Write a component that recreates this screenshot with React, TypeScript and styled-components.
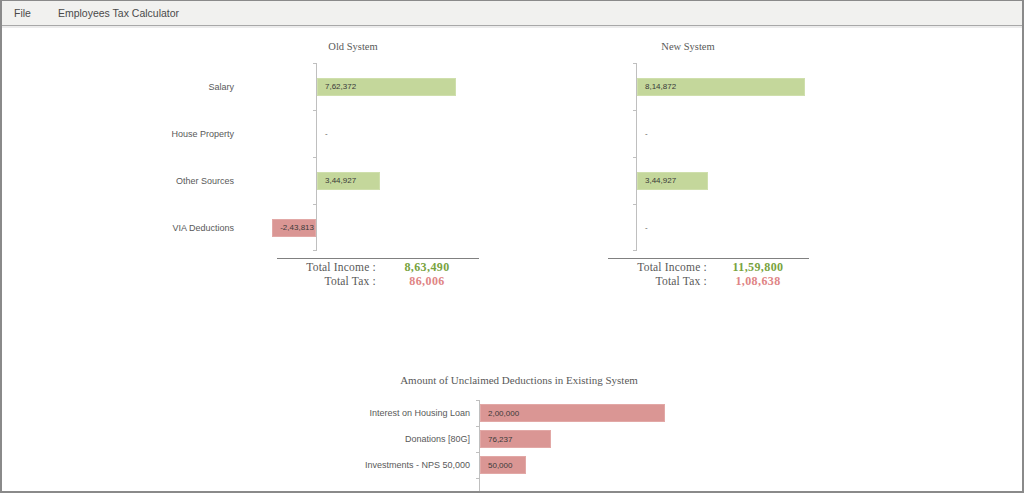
import React from "react";
import styled, { createGlobalStyle } from "styled-components";

const Global = createGlobalStyle`
  html, body {
    margin: 0;
    padding: 0;
    background: #ffffff;
  }
  * {
    box-sizing: border-box;
  }
`;

const SANS = `"Liberation Sans", Arial, sans-serif`;
const SERIF = `"Liberation Serif", "Times New Roman", serif`;

const Frame = styled.div`
  width: 1024px;
  height: 493px;
  border-style: solid;
  border-color: #8a8a8a;
  border-width: 1px 2px 2px 2px;
  background: #ffffff;
  overflow: hidden;
  display: flex;
  flex-direction: column;
`;

const MenuBar = styled.div`
  height: 25px;
  flex: none;
  display: flex;
  align-items: center;
  gap: 27px;
  padding-left: 12px;
  background: #f1f1ef;
  border-bottom: 1px solid #a8a8a8;
  box-shadow: 0 2px 0 #ececec;
  font-family: ${SANS};
  font-size: 10.5px;
  color: #4a4a4a;
`;

const MenuItem = styled.span`
  padding-bottom: 1px;
`;

const Content = styled.div`
  flex: 1;
  padding-top: 14px;
  display: flex;
  flex-direction: column;
`;

const TopRow = styled.div`
  display: flex;
  align-items: flex-start;
`;

const Block = styled.div<{ $left: number }>`
  margin-left: ${({ $left }) => $left}px;
  display: flex;
  flex-direction: column;
`;

const Title = styled.div<{ $width: number; $size?: number; $gap?: number }>`
  width: ${({ $width }) => $width}px;
  text-align: center;
  font-family: ${SERIF};
  font-size: ${({ $size }) => $size ?? 10.5}px;
  line-height: 13px;
  color: #595959;
  margin-bottom: ${({ $gap }) => $gap ?? 10}px;
`;

const Row = styled.div<{ $label: number; $neg: number; $pos: number; $h: number }>`
  display: grid;
  grid-template-columns: ${({ $label, $neg, $pos }) => `${$label}px ${$neg}px ${$pos}px`};
  height: ${({ $h }) => $h}px;
  align-items: center;
`;

const Label = styled.div<{ $pad: number }>`
  text-align: right;
  padding-right: ${({ $pad }) => $pad}px;
  font-family: ${SANS};
  font-size: 9px;
  color: #595959;
  white-space: nowrap;
`;

const NegZone = styled.div`
  height: 100%;
  display: flex;
  align-items: center;
  justify-content: flex-end;
`;

const PosZone = styled.div<{ $last: boolean }>`
  position: relative;
  height: 100%;
  display: flex;
  align-items: center;
  border-left: 1px solid #bfbfbf;

  &::before {
    content: "";
    position: absolute;
    left: -4px;
    top: 0;
    width: 3px;
    height: 1px;
    background: #bfbfbf;
  }

  &::after {
    content: "";
    display: ${({ $last }) => ($last ? "block" : "none")};
    position: absolute;
    left: -4px;
    bottom: 0;
    width: 3px;
    height: 1px;
    background: #bfbfbf;
  }
`;

const Bar = styled.div<{ $tone: "green" | "red"; $neg?: boolean }>`
  height: 18px;
  display: flex;
  align-items: center;
  justify-content: ${({ $neg }) => ($neg ? "flex-end" : "flex-start")};
  padding: ${({ $neg }) => ($neg ? "0 1px 0 0" : "0 0 0 7px")};
  background: ${({ $tone }) => ($tone === "green" ? "#c4d79b" : "#da9694")};
  border: 1px solid ${({ $tone }) => ($tone === "green" ? "#cfdfac" : "#e2a8a6")};
  font-family: ${SANS};
  font-size: 8px;
  color: #3a3a3a;
  white-space: nowrap;
  overflow: visible;
`;

const Dash = styled.span`
  margin-left: 8px;
  font-family: ${SANS};
  font-size: 8px;
  color: #595959;
`;

const Baseline = styled.div<{ $left: number; $width: number }>`
  margin-top: 7px;
  margin-left: ${({ $left }) => $left}px;
  width: ${({ $width }) => $width}px;
  height: 0;
  border-top: 1.5px solid #808080;
  margin-bottom: 1px;
`;

const Totals = styled.div<{ $label: number }>`
  display: grid;
  grid-template-columns: ${({ $label }) => `${$label}px 80px`};
  column-gap: 11px;
  font-family: ${SERIF};
  font-size: 11.5px;
  line-height: 14px;
`;

const TotalLabel = styled.span`
  text-align: right;
  color: #595959;
  letter-spacing: 0.2px;
`;

const TotalValue = styled.span<{ $tone: "green" | "red" }>`
  text-align: center;
  font-size: 12px;
  font-weight: 700;
  letter-spacing: 0.4px;
  color: ${({ $tone }) => ($tone === "green" ? "#79a33e" : "#e08585")};
`;

const BottomSection = styled.div`
  margin-top: 86px;
`;

type Item = { label: string; value: number };

// Indian digit grouping: 8,63,490
const fmt = (v: number) => {
  const neg = v < 0;
  const s = String(Math.abs(v));
  const last3 = s.slice(-3);
  let rest = s.slice(0, -3);
  const parts: string[] = [];
  while (rest.length > 2) {
    parts.unshift(rest.slice(-2));
    rest = rest.slice(0, -2);
  }
  if (rest) parts.unshift(rest);
  const out = parts.length ? `${parts.join(",")},${last3}` : last3;
  return (neg ? "-" : "") + out;
};

function BarChart({
  items,
  scale,
  label,
  labelPad,
  neg,
  pos,
  rowH,
  showLabels,
  tone,
}: {
  items: Item[];
  scale: number;
  label: number;
  labelPad: number;
  neg: number;
  pos: number;
  rowH: number;
  showLabels: boolean;
  tone: "green" | "red";
}) {
  return (
    <div>
      {items.map((it, i) => (
        <Row key={it.label + i} $label={label} $neg={neg} $pos={pos} $h={rowH}>
          <Label $pad={labelPad}>{showLabels ? it.label : ""}</Label>
          <NegZone>
            {it.value < 0 && (
              <Bar $tone="red" $neg style={{ width: Math.round(-it.value * scale) }}>
                {fmt(it.value)}
              </Bar>
            )}
          </NegZone>
          <PosZone $last={i === items.length - 1}>
            {it.value > 0 && (
              <Bar $tone={tone} style={{ width: Math.round(it.value * scale) }}>
                {fmt(it.value)}
              </Bar>
            )}
            {it.value === 0 && it.label !== "" && <Dash>-</Dash>}
          </PosZone>
        </Row>
      ))}
    </div>
  );
}

const oldItems: Item[] = [
  { label: "Salary", value: 762372 },
  { label: "House Property", value: 0 },
  { label: "Other Sources", value: 344927 },
  { label: "VIA Deductions", value: -243813 },
];

const newItems: Item[] = [
  { label: "Salary", value: 814872 },
  { label: "House Property", value: 0 },
  { label: "Other Sources", value: 344927 },
  { label: "VIA Deductions", value: 0 },
];

const unclaimed: Item[] = [
  { label: "Interest on Housing Loan", value: 200000 },
  { label: "Donations [80G]", value: 76237 },
  { label: "Investments - NPS 50,000", value: 50000 },
  { label: "", value: 0 },
];

export default function App() {
  return (
    <>
      <Global />
      <Frame>
        <MenuBar>
          <MenuItem>File</MenuItem>
          <MenuItem>Employees Tax Calculator</MenuItem>
        </MenuBar>
        <Content>
          <TopRow>
            <Block $left={146}>
              <Title $width={410}>Old System</Title>
              <BarChart
                items={oldItems}
                scale={0.0001823}
                label={86}
                labelPad={0}
                neg={82}
                pos={164}
                rowH={47}
                showLabels
                tone="green"
              />
              <Baseline $left={129} $width={202} />
              <Totals $label={228}>
                <TotalLabel>Total Income :</TotalLabel>
                <TotalValue $tone="green">8,63,490</TotalValue>
                <TotalLabel>Total Tax :</TotalLabel>
                <TotalValue $tone="red">86,006</TotalValue>
              </Totals>
            </Block>
            <Block $left={2}>
              <Title $width={256}>New System</Title>
              <BarChart
                items={newItems}
                scale={0.0002065}
                label={76}
                labelPad={0}
                neg={0}
                pos={174}
                rowH={47}
                showLabels={false}
                tone="green"
              />
              <Baseline $left={48} $width={201} />
              <Totals $label={147}>
                <TotalLabel>Total Income :</TotalLabel>
                <TotalValue $tone="green">11,59,800</TotalValue>
                <TotalLabel>Total Tax :</TotalLabel>
                <TotalValue $tone="red">1,08,638</TotalValue>
              </Totals>
            </Block>
          </TopRow>
          <BottomSection>
            <Block $left={298}>
              <Title $width={438} $size={11} $gap={13}>
                Amount of Unclaimed Deductions in Existing System
              </Title>
              <BarChart
                items={unclaimed}
                scale={0.000925}
                label={179}
                labelPad={9}
                neg={0}
                pos={240}
                rowH={26}
                showLabels
                tone="red"
              />
            </Block>
          </BottomSection>
        </Content>
      </Frame>
    </>
  );
}
